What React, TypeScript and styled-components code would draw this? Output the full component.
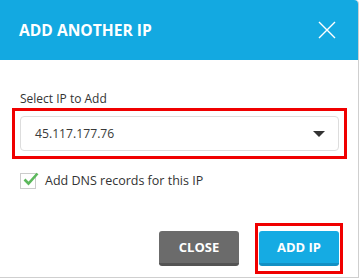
import React from "react"
import styled, { createGlobalStyle } from "styled-components"

const GlobalStyle = createGlobalStyle`
    html, body {
        margin: 0;
        padding: 0;
        background: #ffffff;
    }
    body {
        font-family: "Open Sans", "Liberation Sans", sans-serif;
        color: #333333;
    }
`

const Modal = styled.div`
    width: 358px;
    height: 277px;
    background: #ffffff;
    border-right: 1px solid #cfcfcf;
    border-bottom: 1px solid #cfcfcf;
    border-top-right-radius: 4px;
    display: flex;
    flex-direction: column;
`

const Header = styled.div`
    height: 60px;
    background: #13a9e1;
    border-top-right-radius: 4px;
    display: flex;
    align-items: center;
    justify-content: space-between;
    padding: 0 22px 0 19px;
`

const Title = styled.h2`
    margin: 0;
    font-size: 15.6px;
    font-weight: 700;
    color: #ffffff;
`

const CloseIcon = styled.button`
    width: 18px;
    height: 18px;
    padding: 0;
    border: none;
    background: none;
    display: flex;
    cursor: pointer;
`

const Body = styled.div`
    padding: 30px 19px 0 20px;
    display: flex;
    flex-direction: column;
`

const Label = styled.label`
    font-size: 12px;
    line-height: 18px;
    color: #333333;
`

const Highlight = styled.div<{ $padX: number; $padY: number }>`
    border: 3px solid #f00000;
    padding: ${({ $padY, $padX }) => `${$padY}px ${$padX}px`};
    display: flex;
`

const FieldHighlight = styled(Highlight)`
    margin: 0 -8px;
`

const Select = styled.div`
    flex: 1;
    height: 35px;
    box-sizing: border-box;
    border: 1px solid #dddddd;
    border-radius: 4px;
    display: flex;
    align-items: center;
    justify-content: space-between;
    padding: 0 13px 0 14px;
    font-size: 12.2px;
    color: #3a3a3a;
`

const Caret = styled.span`
    width: 0;
    height: 0;
    border-left: 6px solid transparent;
    border-right: 6px solid transparent;
    border-top: 6px solid #333333;
`

const CheckRow = styled.label`
    margin-top: 14px;
    display: flex;
    align-items: center;
    gap: 9px;
    font-size: 12.5px;
    line-height: 16px;
    color: #333333;
`

const CheckBox = styled.span`
    position: relative;
    width: 16px;
    height: 16px;
    box-sizing: border-box;
    border: 1px solid #cccccc;
    background: #ffffff;
    flex-shrink: 0;

    svg {
        position: absolute;
        left: 2px;
        top: -2px;
    }
`

const Footer = styled.div`
    margin-top: 34px;
    margin-right: -4px;
    display: flex;
    justify-content: flex-end;
    align-items: center;
    gap: 16px;
`

const Button = styled.button<{ $variant: "grey" | "blue" }>`
    width: 80px;
    height: 35px;
    box-sizing: border-box;
    border: none;
    border-radius: 3px;
    font-family: "Open Sans", "Liberation Sans", sans-serif;
    font-size: 13px;
    font-weight: 700;
    color: #ffffff;
    padding: 0;
    cursor: pointer;
    background: ${({ $variant }) => ($variant === "blue" ? "#15abe3" : "#6b6b6b")};
    border-bottom: 3px solid ${({ $variant }) => ($variant === "blue" ? "#1290c4" : "#545454")};
`

export default function App() {
    return (
        <>
            <GlobalStyle />
            <Modal>
                <Header>
                    <Title>ADD ANOTHER IP</Title>
                    <CloseIcon aria-label="Close">
                        <svg width="18" height="18" viewBox="0 0 18 18">
                            <path d="M1 1L17 17M17 1L1 17" stroke="#ffffff" strokeWidth="1.4" />
                        </svg>
                    </CloseIcon>
                </Header>
                <Body>
                    <Label>Select IP to Add</Label>
                    <FieldHighlight $padX={5} $padY={5}>
                        <Select>
                            <span>45.117.177.76</span>
                            <Caret />
                        </Select>
                    </FieldHighlight>
                    <CheckRow>
                        <CheckBox>
                            <svg width="16" height="14" viewBox="0 0 16 14">
                                <path d="M1.5 7.5L5.5 11.5L14.5 1.5" fill="none" stroke="#5cb85c" strokeWidth="2.6" />
                            </svg>
                        </CheckBox>
                        Add DNS records for this IP
                    </CheckRow>
                    <Footer>
                        <Button $variant="grey">CLOSE</Button>
                        <Highlight $padX={1} $padY={5}>
                            <Button $variant="blue">ADD IP</Button>
                        </Highlight>
                    </Footer>
                </Body>
            </Modal>
        </>
    )
}
